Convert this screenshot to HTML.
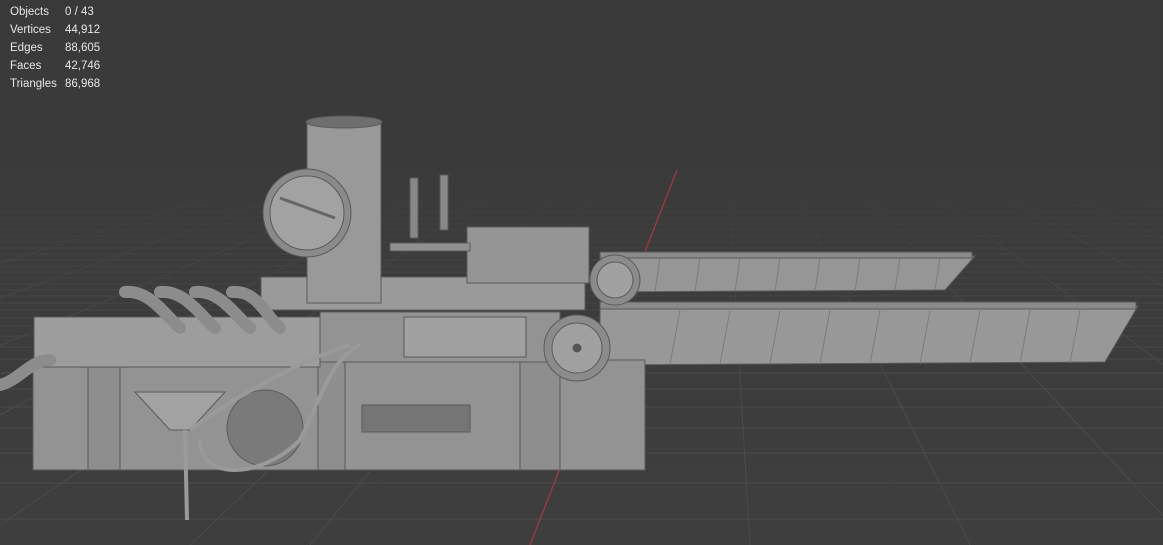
<!DOCTYPE html>
<html><head><meta charset="utf-8"><style>
html,body{margin:0;padding:0;background:#3b3b3b;width:1163px;height:545px;overflow:hidden;font-family:"Liberation Sans",sans-serif}
svg{position:absolute;left:0;top:0}
.st{position:absolute;left:10px;top:3px;color:#e6e6e6;font-size:11.5px;line-height:18px}
.st span{display:inline-block;width:55px}
</style></head><body>
<svg width="1163" height="545" viewBox="0 0 1163 545">
<defs>
<linearGradient id="fade" x1="0" y1="0" x2="0" y2="1">
<stop offset="0.3" stop-color="#fff" stop-opacity="0"/>
<stop offset="0.5" stop-color="#fff" stop-opacity="0.6"/>
<stop offset="0.75" stop-color="#fff" stop-opacity="1"/>
</linearGradient>
<mask id="m"><rect width="1163" height="545" fill="url(#fade)"/></mask>
<linearGradient id="bg" x1="0" y1="0" x2="0" y2="1"><stop offset="0" stop-color="#393939"/><stop offset="1" stop-color="#3e3e3e"/></linearGradient>
</defs>
<rect width="1163" height="545" fill="url(#bg)"/>
<g stroke="#4c4c4c" stroke-width="1" fill="none" mask="url(#m)">
<path d="M0 519H1163M0 483H1163M0 453H1163M0 428H1163M0 407H1163M0 389H1163M0 373H1163M0 359H1163M0 347H1163M0 336H1163M0 326H1163M0 318H1163M0 310H1163M0 303H1163M0 296H1163M0 290H1163M0 284H1163M0 278H1163M0 272H1163M0 266H1163M0 260H1163M0 254H1163M0 248H1163M0 242H1163M0 236H1163M0 230H1163M0 224H1163M0 218H1163M0 212H1163M0 206H1163M0 200H1163"/>
<path d="M720 40L-470 545M720 40L-250 545M720 40L-30 545M720 40L190 545M720 40L310 545M720 40L750 545M720 40L970 545M720 40L1190 545M720 40L1410 545M720 40L1630 545M720 40L1850 545M720 40L2070 545M720 40L2290 545M720 40L-690 545M720 40L-910 545"/>
</g>
<path d="M530 545L677 170" stroke="#a33a48" stroke-width="1.2"/>
<g fill="#8e8e8e" stroke="#5a5a5a" stroke-width="1">
<path d="M600 256L975 256L945 290L600 292Z" fill="#969696"/>
<path d="M600 306L1138 306L1105 362L600 365Z" fill="#989898"/>
<g stroke="#7c7c7c" fill="none">
<path d="M660 258L655 291M700 258L695 291M740 258L735 291M780 258L775 291M820 258L815 291M860 258L855 291M900 258L895 290M940 258L935 290"/>
<path d="M680 310L670 364M730 310L720 364M780 310L770 364M830 310L820 364M880 310L870 364M930 310L920 364M980 310L970 363M1030 310L1020 363M1080 310L1070 363"/>
</g>
<path d="M600 252H972V258H600Z M600 302H1136V309H600Z" fill="#8a8a8a"/>
<path d="M33 360H645V470H33Z" fill="#939393"/>
<path d="M88 318H120V470H88Z M318 318H345V470H318Z M520 360H560V470H520Z" fill="#8e8e8e"/>
<path d="M362 405H470V432H362Z" fill="#757575"/>
<path d="M34 317H320V367H34Z" fill="#9d9d9d"/>
<path d="M261 277H585V310H261Z" fill="#9a9a9a"/>
<path d="M320 312H560V362H320Z" fill="#939393"/>
<path d="M404 317H526V357H404Z" fill="#a0a0a0"/>
<path d="M467 227H589V283H467Z" fill="#959595"/>
<path d="M390 243H470V251H390Z" fill="#919191"/>
<path d="M307 122H381V303H307Z" fill="#999"/>
<ellipse cx="344" cy="122" rx="38" ry="6" fill="#6e6e6e"/>
<path d="M410 178h8v60h-8z M440 175h8v55h-8z" fill="#888"/>
<circle cx="307" cy="213" r="44" fill="#8a8a8a"/>
<circle cx="307" cy="213" r="37" fill="#a2a2a2"/>
<path d="M280 198L335 218" stroke="#666" stroke-width="3"/>
<circle cx="577" cy="348" r="33" fill="#8b8b8b"/>
<circle cx="577" cy="348" r="25" fill="#a0a0a0"/>
<circle cx="577" cy="348" r="4" fill="#555"/>
<circle cx="615" cy="280" r="25" fill="#8b8b8b"/>
<circle cx="615" cy="280" r="18" fill="#a0a0a0"/>
<path d="M135 392H225L190 430H170Z" fill="#a2a2a2"/>
<circle cx="265" cy="428" r="38" fill="#7a7a7a"/>
<g fill="none" stroke="#8c8c8c" stroke-width="12" stroke-linecap="round">
<path d="M0 385C20 380 30 360 50 360"/>
<path d="M125 292C150 290 165 315 180 328"/><path d="M160 292C185 290 200 315 215 328"/><path d="M195 292C220 290 235 315 250 328"/><path d="M232 292C257 290 265 315 280 328"/>
</g>
<g fill="none" stroke="#9a9a9a" stroke-width="4">
<path d="M190 430C230 400 300 360 350 345"/><path d="M200 440C200 480 260 480 300 440C320 400 330 360 360 345"/>
<path d="M185 430L187 520"/>
</g>
</g>
</svg>
<div class="st">
<div><span>Objects</span>0 / 43</div>
<div><span>Vertices</span>44,912</div>
<div><span>Edges</span>88,605</div>
<div><span>Faces</span>42,746</div>
<div><span>Triangles</span>86,968</div>
</div>
</body></html>
